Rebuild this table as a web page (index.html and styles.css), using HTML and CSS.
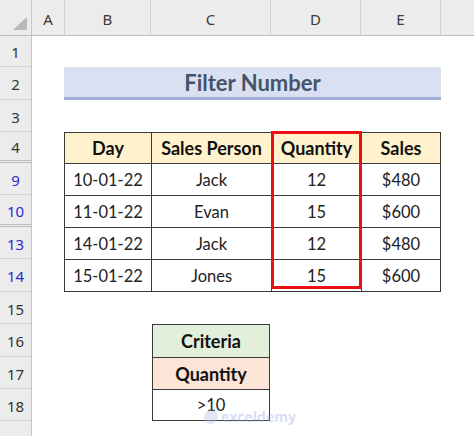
FILE: index.html
```html
<!DOCTYPE html>
<html>
<head>
<meta charset="utf-8">
<link rel="stylesheet" href="styles.css">
</head>
<body>
<div class="sheet">
  <div class="corner"><span class="tri"></span></div>
  <div class="colhdr">A</div>
  <div class="colhdr">B</div>
  <div class="colhdr">C</div>
  <div class="colhdr">D</div>
  <div class="colhdr">E</div>
  <div class="colhdr last"></div>

  <div class="rowhdr r1">1</div>
  <div class="rowhdr r2">2</div>
  <div class="rowhdr r3">3</div>
  <div class="rowhdr r4 filt">4</div>
  <div class="rowhdr r9 blue">9</div>
  <div class="rowhdr r10 blue filt">10</div>
  <div class="rowhdr r13 blue">13</div>
  <div class="rowhdr r14 blue">14</div>
  <div class="rowhdr r15">15</div>
  <div class="rowhdr r16">16</div>
  <div class="rowhdr r17">17</div>
  <div class="rowhdr r18">18</div>
  <div class="rowhdr r19"></div>

  <div class="banner">Filter Number</div>

  <div class="table">
    <div class="th">Day</div>
    <div class="th">Sales Person</div>
    <div class="th">Quantity</div>
    <div class="th">Sales</div>
    <div class="td">10-01-22</div><div class="td">Jack</div><div class="td">12</div><div class="td">$480</div>
    <div class="td">11-01-22</div><div class="td">Evan</div><div class="td">15</div><div class="td">$600</div>
    <div class="td">14-01-22</div><div class="td">Jack</div><div class="td">12</div><div class="td">$480</div>
    <div class="td">15-01-22</div><div class="td">Jones</div><div class="td">15</div><div class="td">$600</div>
  </div>

  <div class="criteria">
    <div class="cr green">Criteria</div>
    <div class="cr peach">Quantity</div>
    <div class="cr val">&gt;10</div>
  </div>

  <div class="redbox"></div>
  <div class="watermark"><span class="wm-logo"></span><span class="wm-text">exceldemy</span></div>
</div>
</body>
</html>
```
FILE: styles.css
```css
* { box-sizing: border-box; }
html, body { margin: 0; padding: 0; background: #fff; }
body { width: 474px; height: 436px; overflow: hidden; }

.sheet {
  position: relative;
  display: grid;
  width: 474px;
  height: 436px;
  grid-template-columns: 32px 33px 86px 120px 90px 80px 1fr;
  grid-template-rows: 36px 31px 33px 32px 31px 32px 32px 32px 33px 32px 33px 32px 32px 1fr;
  font-family: Lato, "Open Sans", sans-serif;
  color: #1a1a1a;
}

.corner {
  grid-column: 1; grid-row: 1;
  background: #ececec;
  border-right: 1px solid #c9c9c9;
  border-bottom: 1px solid #bdbdbd;
  position: relative;
}
.tri {
  position: absolute;
  right: 4px; bottom: 5px;
  width: 0; height: 0;
  border-left: 14px solid transparent;
  border-bottom: 13px solid #b9b9b9;
}

.colhdr {
  grid-row: 1;
  background: #ececec;
  border-right: 1px solid #d2d2d2;
  border-bottom: 1px solid #bdbdbd;
  display: flex; align-items: center; justify-content: center;
  font-family: "Noto Sans", "Open Sans", sans-serif;
  font-size: 15px;
  color: #3a3a3a;
  padding-top: 2px;
}
.colhdr.last { border-right: none; }

.rowhdr {
  grid-column: 1;
  background: #ececec;
  border-right: 1px solid #c4c4c4;
  border-bottom: 1px solid #d2d2d2;
  display: flex; align-items: center; justify-content: center;
  font-family: "Noto Sans", "Open Sans", sans-serif;
  font-size: 15px;
  color: #333;
  padding-top: 2px;
}
.rowhdr.blue { color: #2a2ad0; }
.rowhdr.filt { border-bottom: 3px double #bdbdbd; }
.rowhdr.r19 { border-bottom: none; }

.banner {
  grid-column: 3 / 7; grid-row: 3;
  margin-left: -1px;
  background: #d9e0f1;
  border-bottom: 3px solid #a3afd8;
  display: flex; align-items: center; justify-content: center;
  font-weight: 700;
  font-size: 22px;
  color: #44546a;
  padding-top: 1px;
}

.table {
  grid-column: 3 / 7; grid-row: 5 / 10;
  margin-left: -1px;
  display: grid;
  grid-template-columns: 86px 119px 89px 78px;
  grid-template-rows: 30px 31px 31px 31px 31px;
  gap: 1px;
  padding: 1px;
  background: #3a3a3a;
}
.th, .td {
  display: flex; align-items: center; justify-content: center;
}
.th { background: #fff2cc; font-weight: 700; color: #111; font-size: 18px; }
.td { background: #fff; color: #222; font-size: 16.5px; }

.criteria {
  grid-column: 4; grid-row: 11 / 14;
  margin-left: 1px; margin-right: 1px;
  display: grid;
  grid-template-rows: 32px 31px 30px;
  gap: 1px;
  padding: 1px;
  background: #3a3a3a;
}
.cr {
  display: flex; align-items: center; justify-content: center;
}
.cr.green { background: #e2efda; font-weight: 700; color: #111; font-size: 18px; }
.cr.peach { background: #fce4d6; font-weight: 700; color: #111; font-size: 18px; }
.cr.val { background: #fff; color: #222; font-size: 16.5px; }

.redbox {
  position: absolute;
  left: 271px; top: 131px;
  width: 91px; height: 158px;
  border: 3px solid #ec1015;
}

.watermark {
  position: absolute;
  left: 204px; top: 407px;
  display: flex; align-items: center; gap: 3px;
  opacity: 0.4;
  pointer-events: none;
}
.wm-logo {
  width: 14px; height: 14px;
  border-radius: 50%;
  background: #b4c1e6;
}
.wm-text {
  font-family: "Open Sans", sans-serif;
  font-weight: 700;
  font-size: 14px;
  color: #9fb0e0;
}
```
